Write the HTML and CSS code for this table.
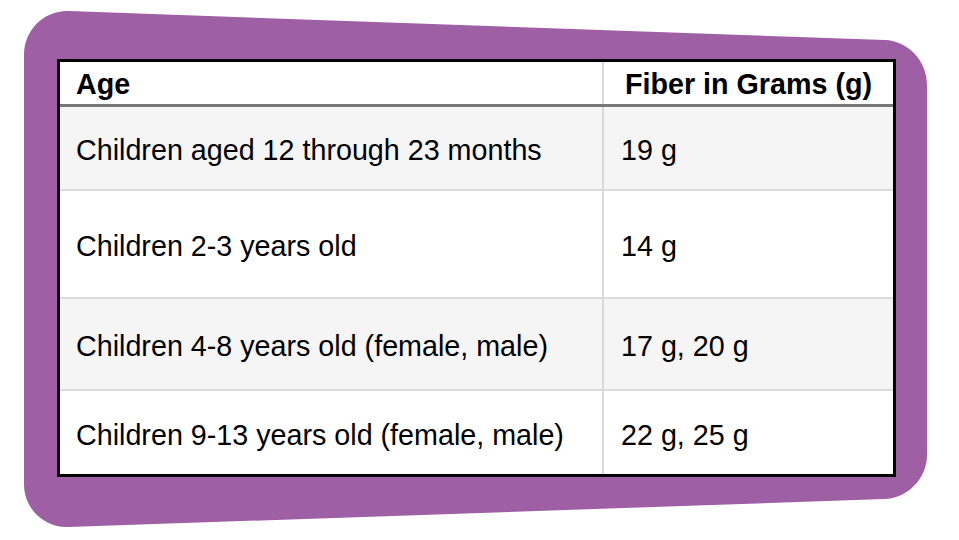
FILE: index.html
```html
<!DOCTYPE html>
<html lang="en">
<head>
<meta charset="utf-8">
<title>Fiber in Grams</title>
<link rel="stylesheet" href="styles.css">
</head>
<body>
<div class="page">
  <svg class="backdrop" width="959" height="540" viewBox="0 0 959 540" aria-hidden="true">
    <path d="M24,55 C24,30 44,10.2 69,11.1 L885,40.1 C908,40.9 927,61 927,85 L927,455 C927,478.4 907.7,498.3 884,499.1 L68,527 C43.8,527.8 24,508.5 24,484 Z" fill="#9e5fa5"/>
  </svg>
  <div class="table">
    <div class="row head">
      <div class="cell c1">Age</div>
      <div class="cell c2">Fiber in Grams (g)</div>
    </div>
    <div class="row r1 shade">
      <div class="cell c1">Children aged 12 through 23 months</div>
      <div class="cell c2">19 g</div>
    </div>
    <div class="row r2">
      <div class="cell c1">Children 2-3 years old</div>
      <div class="cell c2">14 g</div>
    </div>
    <div class="row r3 shade">
      <div class="cell c1">Children 4-8 years old (female, male)</div>
      <div class="cell c2">17 g, 20 g</div>
    </div>
    <div class="row r4">
      <div class="cell c1">Children 9-13 years old (female, male)</div>
      <div class="cell c2">22 g, 25 g</div>
    </div>
  </div>
</div>
</body>
</html>
```

FILE: styles.css
```css
* { box-sizing: border-box; }

html, body {
  margin: 0;
  padding: 0;
  background: #ffffff;
}

body {
  font-family: "Liberation Sans", Arial, sans-serif;
  color: #000000;
}

.page {
  position: relative;
  width: 959px;
  height: 540px;
  padding: 59px 0 0 57px;
  overflow: hidden;
}

.backdrop {
  position: absolute;
  left: 0;
  top: 0;
  z-index: 0;
}

.table {
  position: relative;
  z-index: 1;
  width: 839px;
  border: 3px solid #000000;
  background: #ffffff;
}

.row {
  display: grid;
  grid-template-columns: 544px 1fr;
  border-bottom: 2px solid #dcdcdc;
  font-size: 28.7px;
}

.row.shade { background: #f5f5f5; }

.row.head {
  height: 45px;
  border-bottom: 3px solid #787878;
  font-weight: bold;
  background: #ffffff;
}

.head .cell { padding-top: 2px; }

.r1 { height: 84px; }
.r2 { height: 108px; }
.r3 { height: 92px; }
.r4 { height: 83px; border-bottom: none; }

.cell {
  display: flex;
  align-items: center;
  white-space: nowrap;
}

.row:not(.head) .cell { padding-top: 5px; }

.c1 {
  padding-left: 16px;
  border-right: 2px solid #dadada;
}

.c2 { padding-left: 17px; }

.head .c2 {
  justify-content: center;
  padding-left: 0;
}
```
